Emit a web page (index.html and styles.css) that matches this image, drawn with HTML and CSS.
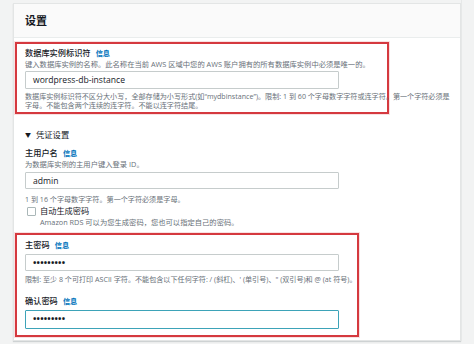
FILE: index.html
```html
<!DOCTYPE html>
<html lang="zh-CN">
<head>
<meta charset="utf-8">
<link rel="stylesheet" href="styles.css">
</head>
<body>
<div class="page">
  <div class="panel">
    <div class="panel-header"><h2>设置</h2></div>
    <div class="panel-body">
      <div class="hl hl-1">
        <div class="label">数据库实例标识符 <a class="info">信息</a></div>
        <div class="desc">键入数据库实例的名称。此名称在当前 AWS 区域中您的 AWS 账户拥有的所有数据库实例中必须是唯一的。</div>
        <div class="input">wordpress-db-instance</div>
        <div class="constraint">数据库实例标识符不区分大小写，全部存储为小写形式(如“mydbinstance”)。限制: 1 到 60 个字母数字字符或连字符。第一个字符必须是<br>字母。不能包含两个连续的连字符。不能以连字符结尾。</div>
      </div>

      <div class="section-toggle"><span class="caret">▼</span>凭证设置</div>

      <div class="field">
        <div class="label">主用户名 <a class="info">信息</a></div>
        <div class="desc">为数据库实例的主用户键入登录 ID。</div>
        <div class="input">admin</div>
        <div class="constraint">1 到 16 个字母数字字符。第一个字符必须是字母。</div>
        <div class="check-row">
          <span class="checkbox"></span>
          <div>
            <div class="check-label">自动生成密码</div>
            <div class="desc">Amazon RDS 可以为您生成密码，您也可以指定自己的密码。</div>
          </div>
        </div>
      </div>

      <div class="hl hl-2">
        <div class="label">主密码 <a class="info">信息</a></div>
        <div class="input pw">•••••••••</div>
        <div class="constraint">限制: 至少 8 个可打印 ASCII 字符。不能包含以下任何字符: / (斜杠)、' (单引号)、" (双引号)和 @ (at 符号)。</div>
        <div class="label label-2">确认密码 <a class="info">信息</a></div>
        <div class="input pw focus">•••••••••</div>
      </div>
    </div>
  </div>
  <div class="scroll-edge"></div>
</div>
</body>
</html>
```
FILE: styles.css
```css
* { box-sizing: border-box; }
html, body { margin: 0; padding: 0; }
body {
  width: 474px;
  height: 344px;
  overflow: hidden;
  background: #f2f3f3;
  font-family: "Open Sans", "Noto Sans CJK SC", sans-serif;
  color: #16191f;
}
.page {
  display: flex;
  padding: 3px 0 0 13px;
}
.panel {
  width: 448px;
  height: 338px;
  background: #fff;
  border: 1px solid #e3e5e5;
  box-shadow: 0 1px 1px rgba(0,28,36,0.15);
}
.scroll-edge {
  width: 1px;
  height: 341px;
  margin-top: -3px;
  background: #e6e8e8;
}
.panel-header {
  height: 34px;
  background: #fafafa;
  border-bottom: 1px solid #eaeded;
  display: flex;
  align-items: center;
  padding-left: 11px;
}
.panel-header h2 {
  margin: 0;
  font-size: 11px;
  font-weight: 700;
  line-height: 14px;
}
.panel-body {
  padding: 4px 0 0 1px;
}
.hl {
  border: 2px solid #d5393f;
  box-shadow: 0 0 0 1px rgba(213,57,63,0.15);
  padding: 3px 8px 3px 8px;
}
.hl-1 { width: 374px; }
.hl-2 { width: 344px; margin-top: 6px; padding-top: 4px; padding-bottom: 6px; }
.label {
  font-size: 8.2px;
  line-height: 11px;
  font-weight: 500;
}
.info {
  color: #0073bb;
  font-size: 7.2px;
  font-weight: 700;
  margin-left: 3px;
}
.desc {
  font-size: 7.3px;
  line-height: 10px;
  color: #687078;
  white-space: nowrap;
}
.input {
  width: 314px;
  height: 18px;
  border: 1px solid #c6cccc;
  border-radius: 1px;
  margin-top: 2px;
  padding-left: 7px;
  font-size: 8.6px;
  line-height: 16px;
  color: #16191f;
}
.constraint {
  font-size: 7.1px;
  line-height: 8.5px;
  color: #687078;
  margin-top: 3px;
  white-space: nowrap;
}
.section-toggle {
  margin: 15px 0 0 10px;
  font-size: 8.3px;
  line-height: 11px;
  color: #16191f;
}
.caret {
  font-size: 6px;
  margin-right: 5px;
  vertical-align: 1px;
}
.field {
  padding-left: 10px;
  margin-top: 6px;
}
.field .input { height: 17px; margin-top: 3px; }
.field .constraint { margin-top: 5px; line-height: 10px; }
.check-row {
  display: flex;
  gap: 4px;
  margin-top: 3px;
}
.checkbox {
  width: 9px;
  height: 9px;
  border: 1px solid #aab7b8;
  border-radius: 1px;
  margin: 0 0 0 2px;
  flex: none;
}
.check-label {
  font-size: 8.2px;
  line-height: 10px;
  margin-top: -1px;
}
.check-row .desc { margin-top: 1px; }
.pw {
  font-size: 9px;
  font-weight: 700;
  letter-spacing: 0.2px;
  height: 17px;
  margin-top: 3px;
}
.hl-2 .constraint { margin-top: 4px; line-height: 9px; }
.label-2 { margin-top: 11px; }
.focus {
  height: 19px;
  border: 1.5px solid #3da3b8;
  margin-top: 3px;
}
```
